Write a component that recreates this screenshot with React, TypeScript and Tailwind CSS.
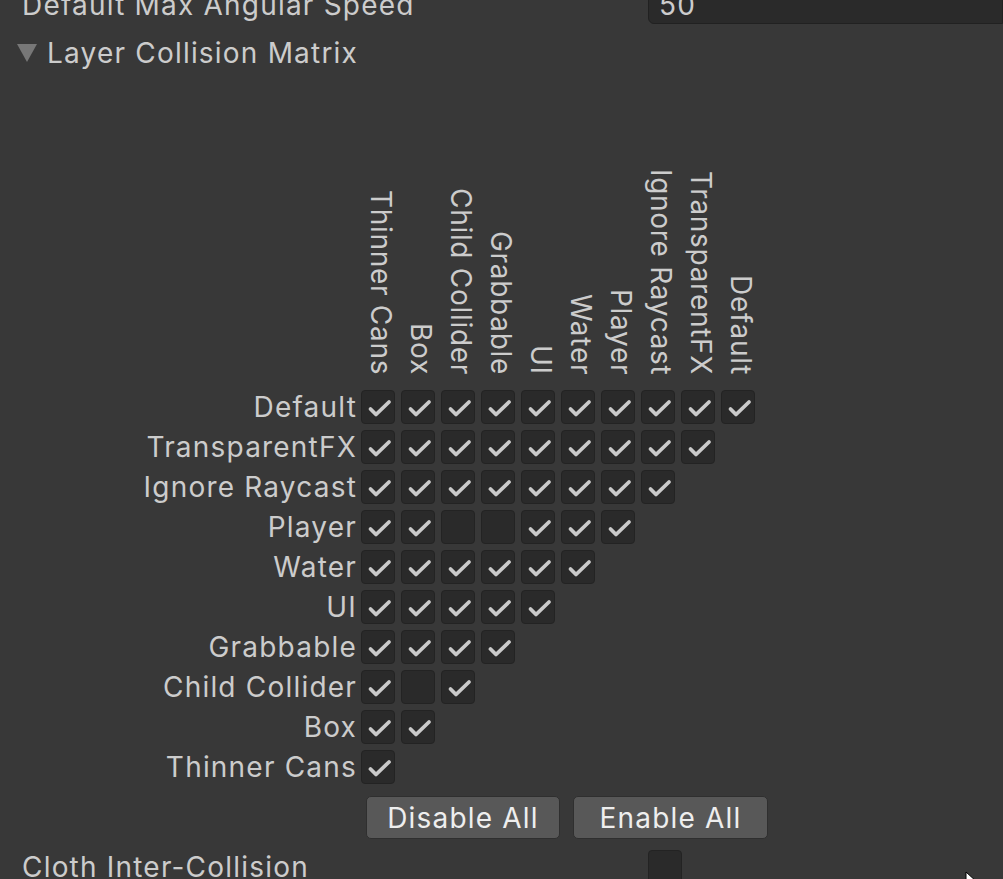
import React from 'react';

const cols = ['Thinner Cans', 'Box', 'Child Collider', 'Grabbable', 'UI', 'Water', 'Player', 'Ignore Raycast', 'TransparentFX', 'Default'];
const rows = [...cols].reverse();

// row label -> column indexes that are off
const off: Record<string, number[]> = {
  Player: [2, 3],
  'Child Collider': [1],
};

const Check = () => (
  <svg width="34" height="34" viewBox="0 0 34 34" className="block">
    <path d="M8.5 18 L14 23.5 L27 11" fill="none" stroke="#cacaca" strokeWidth="3.8" strokeLinecap="round" strokeLinejoin="round" />
  </svg>
);

const Box: React.FC<{ on: boolean }> = ({ on }) => (
  <div className="w-[34px] h-[34px] shrink-0 rounded-[4px] bg-[#2a2a2a] border border-[#232323]">
    {on && <Check />}
  </div>
);

export default function App() {
  return (
    <div
      className="relative w-[1003px] h-[879px] overflow-hidden bg-[#383838] text-[#cccccc] text-[28px] leading-none tracking-[1.2px]"
      style={{ fontFamily: 'Inter, "Noto Sans", sans-serif' }}
    >
      {/* clipped property above */}
      <div className="-mt-[14px] flex h-[38px] items-center">
        <div className="w-[648px] pl-[22px] whitespace-nowrap">Default Max Angular Speed</div>
        <div className="flex-1 h-full flex items-center pl-[10px] bg-[#2a2a2a] border border-[#212121] rounded-bl-[6px]">50</div>
      </div>

      {/* foldout */}
      <div className="flex h-[58px] items-center pl-[17px] gap-[10px]">
        <svg width="20" height="20" viewBox="0 0 20 20">
          <path d="M0 1 L20 1 L10 19 Z" fill="#777777" />
        </svg>
        <span>Layer Collision Matrix</span>
      </div>

      {/* column headers */}
      <div className="flex h-[293px] items-end pl-[361px]">
        {cols.map((c) => (
          <div key={c} className="w-[40px] shrink-0 flex justify-center">
            <span className="[writing-mode:vertical-rl] leading-[34px] tracking-[0.7px] whitespace-nowrap">{c}</span>
          </div>
        ))}
      </div>

      {/* matrix rows */}
      <div className="mt-[15px] flex flex-col gap-[6px]">
        {rows.map((r, i) => (
          <div key={r} className="flex h-[34px] items-center gap-[4px]">
            <div className="w-[357px] text-right whitespace-nowrap">{r}</div>
            <div className="flex gap-[6px]">
              {Array.from({ length: 10 - i }).map((_, j) => (
                <Box key={j} on={!(off[r] || []).includes(j)} />
              ))}
            </div>
          </div>
        ))}
      </div>

      {/* buttons */}
      <div className="mt-[12px] flex gap-[13px] pl-[366px]">
        <button className="w-[194px] h-[43px] rounded-[5px] bg-[#585858] border border-[#2f2f2f] text-[#eeeeee]">Disable All</button>
        <button className="w-[195px] h-[43px] rounded-[5px] bg-[#585858] border border-[#2f2f2f] text-[#eeeeee]">Enable All</button>
      </div>

      {/* next property */}
      <div className="mt-[11px] flex h-[34px] items-center">
        <div className="w-[648px] pl-[22px] whitespace-nowrap">Cloth Inter-Collision</div>
        <div className="w-[34px] h-[34px] rounded-[4px] bg-[#2a2a2a] border border-[#232323]" />
      </div>

      {/* mouse pointer */}
      <svg className="absolute left-[965px] top-[871px]" width="14" height="20" viewBox="0 0 14 20">
        <path d="M1 1 L1 16 L5 12 L8 19 L10 18 L7 11 L12 11 Z" fill="#ffffff" stroke="#000000" strokeWidth="1" />
      </svg>
    </div>
  );
}
